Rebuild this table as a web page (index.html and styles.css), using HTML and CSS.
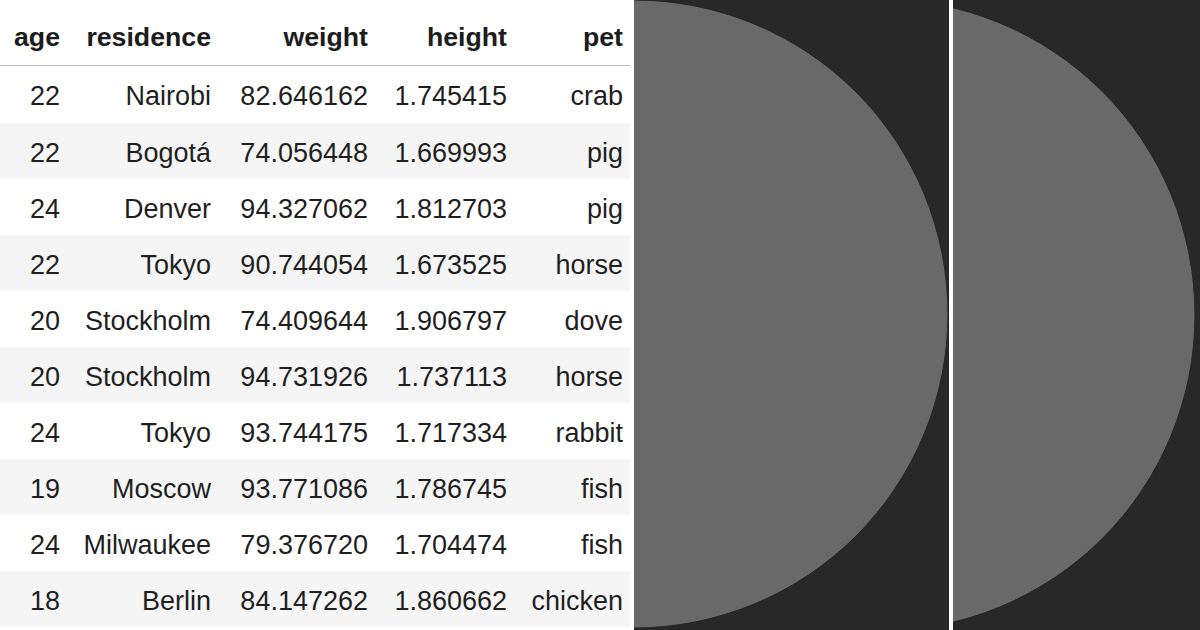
FILE: index.html
```html
<!DOCTYPE html>
<html lang="en">
<head>
<meta charset="utf-8">
<title>DataFrame</title>
<link rel="stylesheet" href="styles.css">
</head>
<body>
<div class="page">
  <div class="table-wrap">
    <table class="dataframe">
      <colgroup>
        <col class="c-age"><col class="c-res"><col class="c-wt"><col class="c-ht"><col class="c-pet">
      </colgroup>
      <thead>
        <tr><th>age</th><th>residence</th><th>weight</th><th>height</th><th class="last">pet</th></tr>
      </thead>
      <tbody>
        <tr><td>22</td><td>Nairobi</td><td>82.646162</td><td>1.745415</td><td class="last">crab</td></tr>
        <tr><td>22</td><td>Bogotá</td><td>74.056448</td><td>1.669993</td><td class="last">pig</td></tr>
        <tr><td>24</td><td>Denver</td><td>94.327062</td><td>1.812703</td><td class="last">pig</td></tr>
        <tr><td>22</td><td>Tokyo</td><td>90.744054</td><td>1.673525</td><td class="last">horse</td></tr>
        <tr><td>20</td><td>Stockholm</td><td>74.409644</td><td>1.906797</td><td class="last">dove</td></tr>
        <tr><td>20</td><td>Stockholm</td><td>94.731926</td><td>1.737113</td><td class="last">horse</td></tr>
        <tr><td>24</td><td>Tokyo</td><td>93.744175</td><td>1.717334</td><td class="last">rabbit</td></tr>
        <tr><td>19</td><td>Moscow</td><td>93.771086</td><td>1.786745</td><td class="last">fish</td></tr>
        <tr><td>24</td><td>Milwaukee</td><td>79.376720</td><td>1.704474</td><td class="last">fish</td></tr>
        <tr><td>18</td><td>Berlin</td><td>84.147262</td><td>1.860662</td><td class="last">chicken</td></tr>
      </tbody>
    </table>
  </div>
  <div class="panel panel-a">
    <svg class="shape" viewBox="0 0 315 630" width="315" height="630" aria-hidden="true">
      <circle cx="0" cy="314" r="314" class="disc"/>
    </svg>
  </div>
  <div class="panel panel-b">
    <svg class="shape" viewBox="0 0 247 630" width="247" height="630" aria-hidden="true">
      <circle cx="-74" cy="315" r="316" class="disc"/>
    </svg>
  </div>
</div>
</body>
</html>
```

FILE: styles.css
```css
html, body {
  margin: 0;
  padding: 0;
  background: #ffffff;
}

.page {
  display: flex;
  width: 1200px;
  height: 630px;
  gap: 4px;
  overflow: hidden;
}

.table-wrap {
  width: 630px;
  flex: 0 0 630px;
  background: #ffffff;
}

.dataframe {
  width: 630px;
  table-layout: fixed;
  border-collapse: collapse;
  border-spacing: 0;
  font-family: "Liberation Sans", Arial, sans-serif;
  color: #1f1f1f;
}

.c-age { width: 68px; }
.c-res { width: 151px; }
.c-wt  { width: 157px; }
.c-ht  { width: 139px; }
.c-pet { width: 115px; }

.dataframe thead tr {
  height: 65px;
  border-bottom: 1px solid #bdbdbd;
}

.dataframe th {
  font-size: 26.7px;
  font-weight: 700;
  text-align: right;
  vertical-align: bottom;
  padding: 0 8px 13px 0;
  line-height: 30px;
  white-space: nowrap;
  color: #1c1c1c;
}

.dataframe tbody tr {
  height: 56px;
}

.dataframe tbody tr:first-child {
  height: 58px;
}

.dataframe tbody tr:nth-child(even) {
  background: #f5f5f5;
}

.dataframe td {
  font-size: 27px;
  text-align: right;
  vertical-align: middle;
  padding: 4px 8px 0 0;
  line-height: 30px;
  white-space: nowrap;
}

.dataframe .last {
  padding-right: 7px;
}

.panel {
  height: 630px;
  background: #282828;
  overflow: hidden;
}

.panel-a {
  flex: 0 0 315px;
}

.panel-b {
  flex: 1 1 auto;
}

.shape {
  display: block;
}

.disc {
  fill: #696969;
  stroke: #232323;
  stroke-width: 1;
}
```
